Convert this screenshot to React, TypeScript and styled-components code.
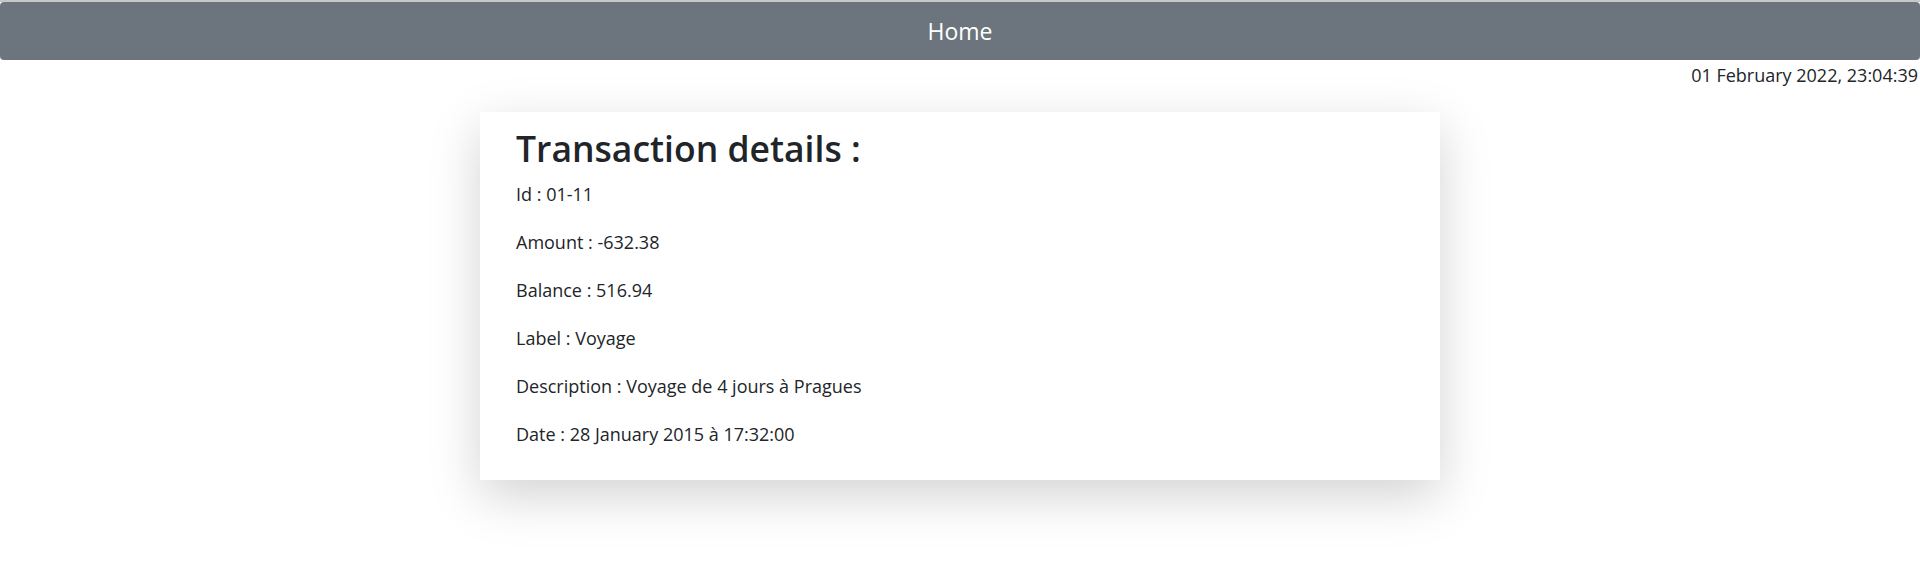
import React from 'react';
import styled, { createGlobalStyle } from 'styled-components';

const GlobalStyle = createGlobalStyle`
  body {
    margin: 0;
    font-family: "Open Sans", "Noto Sans", "Liberation Sans", sans-serif;
    color: #212529;
    background: #fff;
  }
`;

const Page = styled.div`
  border-top: 2px solid #c6c8ca;
  min-height: 565px;
`;

const HomeButton = styled.button`
  display: block;
  width: 100%;
  height: 58px;
  border: none;
  border-radius: 4px;
  background: #6c757d;
  color: #fff;
  font-family: inherit;
  font-size: 23px;
  cursor: pointer;
`;

const Clock = styled.div`
  text-align: right;
  font-size: 18px;
  line-height: 27px;
  margin-top: 2px;
  padding-right: 2px;
`;

const Card = styled.section`
  width: 960px;
  margin: 23px auto 0;
  box-sizing: border-box;
  padding: 15px 36px 0;
  height: 368px;
  background: #fff;
  box-shadow: 0 1rem 3rem rgba(0, 0, 0, 0.175);
`;

const Title = styled.h1`
  margin: 0 0 11px;
  font-size: 35.5px;
  font-weight: 600;
  line-height: 43px;
`;

const Field = styled.p`
  margin: 0 0 21px;
  font-size: 18px;
  line-height: 27px;
`;

const fields: [string, string][] = [
  ['Id', '01-11'],
  ['Amount', '-632.38'],
  ['Balance', '516.94'],
  ['Label', 'Voyage'],
  ['Description', 'Voyage de 4 jours à Pragues'],
  ['Date', '28 January 2015 à 17:32:00'],
];

export default function App() {
  return (
    <Page>
      <GlobalStyle />
      <HomeButton>Home</HomeButton>
      <Clock>01 February 2022, 23:04:39</Clock>
      <Card>
        <Title>Transaction details :</Title>
        {fields.map(([label, value]) => (
          <Field key={label}>
            {label} : {value}
          </Field>
        ))}
      </Card>
    </Page>
  );
}
